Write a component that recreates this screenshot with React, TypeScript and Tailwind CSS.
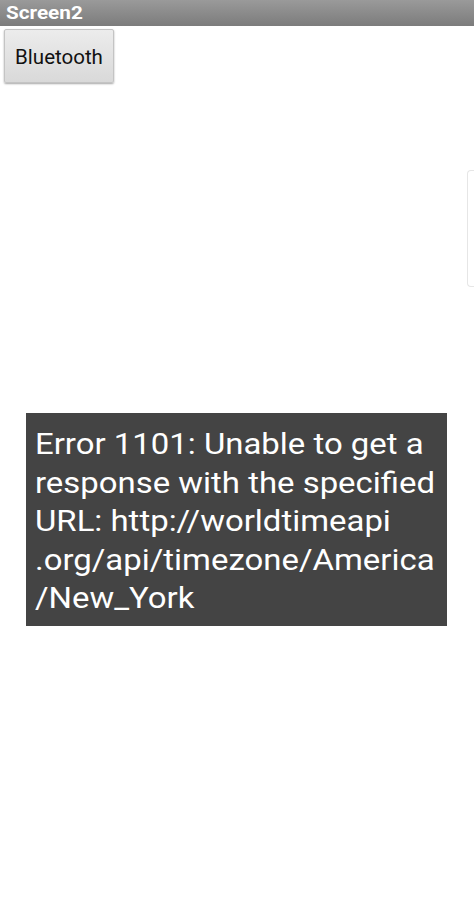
import React from "react";

export default function App() {
  const lines = [
    "Error 1101: Unable to get a",
    "response with the specified",
    "URL: http://worldtimeapi",
    ".org/api/timezone/America",
    "/New_York",
  ];
  return (
    <div className="relative w-[474px] h-[922px] bg-white overflow-hidden" style={{ fontFamily: "Roboto, 'Liberation Sans', sans-serif" }}>
      <div className="h-[26px] bg-gradient-to-b from-[#9a9a9a] to-[#7c7c7c] flex items-center pl-[6px]">
        <span className="text-white font-bold text-[18px] leading-none origin-left scale-x-[1.15] inline-block">Screen2</span>
      </div>
      <div className="pl-[4px] pt-[3px]">
        <button className="w-[110px] h-[54px] rounded-[2px] border border-[#c4c4c4] bg-gradient-to-b from-[#ececec] to-[#d9d9d9] shadow-[0_1px_2px_rgba(0,0,0,0.35)] text-[20.5px] text-[#111] flex items-center justify-center pt-[2px]">
          Bluetooth
        </button>
      </div>
      <div className="absolute right-0 top-[170px] w-[7px] h-[117px] border border-r-0 border-[#e6e6e6] rounded-l-[4px]" />
      <div className="absolute left-[26px] top-[413px] w-[421px] h-[213px] bg-[#444444] pl-[9px] pt-[12px]">
        <div className="text-white text-[29px] leading-[38.6px] origin-left scale-x-[1.135] whitespace-nowrap">
          {lines.map((l) => (
            <div key={l}>{l}</div>
          ))}
        </div>
      </div>
    </div>
  );
}
